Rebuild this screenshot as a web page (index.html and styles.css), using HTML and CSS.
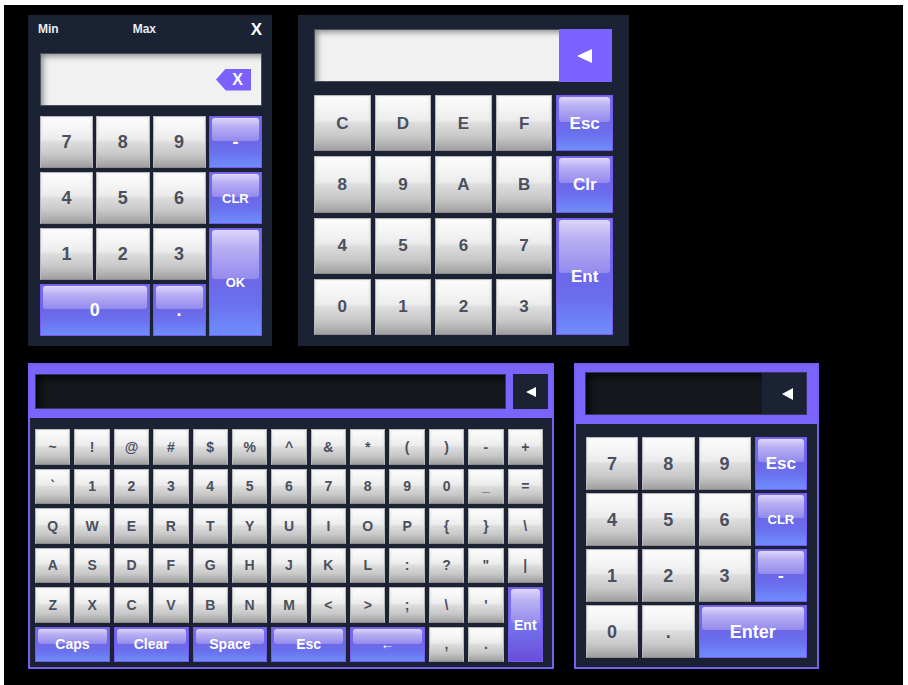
FILE: index.html
```html
<!DOCTYPE html>
<html>
<head>
<meta charset="utf-8">
<link rel="stylesheet" href="styles.css">
</head>
<body>
<div class="page">
  <div class="row row-top">
    <section class="panel pad1">
      <div class="head">
        <span class="min">Min</span>
        <span class="max">Max</span>
        <span class="close">X</span>
      </div>
      <div class="display light">
        <span class="bksp">X</span>
      </div>
      <div class="grid g1">
        <div class="k">7</div><div class="k">8</div><div class="k">9</div><div class="p">-</div>
        <div class="k">4</div><div class="k">5</div><div class="k">6</div><div class="p sm">CLR</div>
        <div class="k">1</div><div class="k">2</div><div class="k">3</div><div class="p sm tall">OK</div>
        <div class="p wide">0</div><div class="p">.</div>
      </div>
    </section>

    <section class="panel pad2">
      <div class="display light split">
        <div class="field"></div>
        <div class="arrow purple"><span class="tri t15"></span></div>
      </div>
      <div class="grid g2">
        <div class="k">C</div><div class="k">D</div><div class="k">E</div><div class="k">F</div><div class="p">Esc</div>
        <div class="k">8</div><div class="k">9</div><div class="k">A</div><div class="k">B</div><div class="p">Clr</div>
        <div class="k">4</div><div class="k">5</div><div class="k">6</div><div class="k">7</div><div class="p tall">Ent</div>
        <div class="k">0</div><div class="k">1</div><div class="k">2</div><div class="k">3</div>
      </div>
    </section>
  </div>

  <div class="row row-bottom">
    <section class="panel framed kb">
      <div class="band kb-band">
        <div class="display dark kb-field"></div>
        <div class="arrow navy kb-arrow"><span class="tri t10"></span></div>
      </div>
      <div class="body kb-body">
        <div class="grid g3">
          <div class="k">~</div><div class="k">!</div><div class="k">@</div><div class="k">#</div><div class="k">$</div><div class="k">%</div><div class="k">^</div><div class="k">&amp;</div><div class="k">*</div><div class="k">(</div><div class="k">)</div><div class="k">-</div><div class="k">+</div>
          <div class="k">`</div><div class="k">1</div><div class="k">2</div><div class="k">3</div><div class="k">4</div><div class="k">5</div><div class="k">6</div><div class="k">7</div><div class="k">8</div><div class="k">9</div><div class="k">0</div><div class="k">_</div><div class="k">=</div>
          <div class="k">Q</div><div class="k">W</div><div class="k">E</div><div class="k">R</div><div class="k">T</div><div class="k">Y</div><div class="k">U</div><div class="k">I</div><div class="k">O</div><div class="k">P</div><div class="k">{</div><div class="k">}</div><div class="k">\</div>
          <div class="k">A</div><div class="k">S</div><div class="k">D</div><div class="k">F</div><div class="k">G</div><div class="k">H</div><div class="k">J</div><div class="k">K</div><div class="k">L</div><div class="k">:</div><div class="k">?</div><div class="k">"</div><div class="k">|</div>
          <div class="k">Z</div><div class="k">X</div><div class="k">C</div><div class="k">V</div><div class="k">B</div><div class="k">N</div><div class="k">M</div><div class="k">&lt;</div><div class="k">&gt;</div><div class="k">;</div><div class="k">\</div><div class="k">'</div><div class="p tall ent-kb">Ent</div>
          <div class="p wide">Caps</div><div class="p wide">Clear</div><div class="p wide">Space</div><div class="p wide">Esc</div><div class="p wide arrow-key">&#8592;</div><div class="k">,</div><div class="k">.</div>
        </div>
      </div>
    </section>

    <section class="panel framed np">
      <div class="band np-band">
        <div class="display dark split np-display">
          <div class="field"></div>
          <div class="arrow navy np-arrow"><span class="tri t13"></span></div>
        </div>
      </div>
      <div class="body np-body">
        <div class="grid g4">
          <div class="k">7</div><div class="k">8</div><div class="k">9</div><div class="p">Esc</div>
          <div class="k">4</div><div class="k">5</div><div class="k">6</div><div class="p sm">CLR</div>
          <div class="k">1</div><div class="k">2</div><div class="k">3</div><div class="p">-</div>
          <div class="k">0</div><div class="k">.</div><div class="p wide enter">Enter</div>
        </div>
      </div>
    </section>
  </div>
</div>
</body>
</html>
```

FILE: styles.css
```css
html, body {
  margin: 0;
  padding: 0;
  background: #ffffff;
  overflow: hidden;
}

.page {
  margin: 5px 5px 0 4px;
  height: 680px;
  background: #000000;
  box-sizing: border-box;
  padding: 10px 0 0 24px;
  font-family: "Liberation Sans", Arial, sans-serif;
  font-weight: bold;
}

.row {
  display: flex;
  align-items: flex-start;
}

.row-top { gap: 26px; }
.row-bottom { gap: 20px; margin-top: 17px; }

.panel {
  background: #1b2233;
  box-sizing: border-box;
}

/* ---------- panel 1 ---------- */
.pad1 {
  width: 244px;
  height: 331px;
  padding: 0 10px 10px 12px;
}

.head {
  height: 28px;
  margin-left: -2px;
  display: flex;
  align-items: center;
  color: #e6ecf5;
  font-size: 12px;
}

.head .max { margin-left: 74px; }
.head .close {
  margin-left: auto;
  font-size: 17px;
  color: #ffffff;
  padding-top: 2px;
}

.display {
  box-sizing: border-box;
}

.light {
  background: #f1f1f1;
  border: 1px solid #4a505c;
  box-shadow: inset 5px 5px 6px -3px rgba(0, 0, 0, 0.45);
}

.pad1 .display {
  margin-top: 10px;
  width: 222px;
  height: 53px;
  display: flex;
  align-items: center;
  justify-content: flex-end;
  padding-right: 10px;
}

.bksp {
  width: 35px;
  height: 22px;
  background: #7b61ff;
  color: #ffffff;
  font-size: 16px;
  display: flex;
  align-items: center;
  justify-content: center;
  padding-left: 8px;
  box-sizing: border-box;
  clip-path: polygon(28% 0, 100% 0, 100% 100%, 28% 100%, 0 50%);
}

.grid {
  display: grid;
}

.g1 {
  margin-top: 10px;
  width: 222px;
  height: 220px;
  grid-template-columns: repeat(4, 1fr);
  grid-template-rows: repeat(4, 1fr);
  column-gap: 3px;
  row-gap: 4px;
  font-size: 18px;
}

/* ---------- keys ---------- */
.k, .p {
  position: relative;
  z-index: 0;
  box-sizing: border-box;
  display: flex;
  align-items: center;
  justify-content: center;
  line-height: 1;
}

.k {
  color: #4a505d;
  border: 1px solid #b9b9b9;
  border-bottom-color: #8c8c8c;
  background: linear-gradient(to bottom, #f4f4f4 0%, #e9e9e9 46%, #dddddd 50%, #c8c8c8 75%, #a0a0a0 100%);
}

.k::before {
  content: "";
  position: absolute;
  z-index: -1;
  left: 2px;
  right: 2px;
  top: 1px;
  height: 44%;
  border-radius: 3px;
  background: linear-gradient(to bottom, rgba(255, 255, 255, 0.7), rgba(255, 255, 255, 0.1));
}

.p {
  color: #ffffff;
  border: 1px solid #7559f2;
  background: linear-gradient(to bottom, #7a6ce8 0%, #6c68e8 50%, #6a70ee 70%, #6f8dfb 100%);
}

.p::before {
  content: "";
  position: absolute;
  z-index: -1;
  left: 2px;
  right: 2px;
  top: 1px;
  height: 46%;
  border-radius: 3px;
  background: linear-gradient(to bottom, #ddd6fa 0%, #b9b0f3 35%, #948aee 100%);
}

.p.sm { font-size: 13px; }
.wide { grid-column: span 2; }
.tall { grid-row: span 2; }

/* ---------- panel 2 ---------- */
.pad2 {
  width: 331px;
  height: 331px;
  padding: 14px 16px 11px 16px;
}

.split {
  display: flex;
}

.pad2 .display {
  width: 298px;
  height: 53px;
  box-shadow: none;
  border: none;
}

.pad2 .field {
  flex: 1;
  background: #f1f1f1;
  border: 1px solid #4a505c;
  border-right: none;
  box-shadow: inset 5px 5px 6px -3px rgba(0, 0, 0, 0.45);
}

.arrow {
  display: flex;
  align-items: center;
  justify-content: center;
  box-sizing: border-box;
}

.purple { background: #7b61ff; }
.navy { background: #1b2233; }

.pad2 .arrow { width: 53px; }

.tri {
  display: block;
  width: 0;
  height: 0;
  border-style: solid;
  border-color: transparent #ffffff transparent transparent;
}

.t15 { border-width: 7px 15px 7px 0; margin-left: -2px; }
.t10 { border-width: 5px 10px 5px 0; }
.t13 { border-width: 6.5px 11px 6.5px 0; margin-left: 6px; }

.g2 {
  margin-top: 13px;
  width: 299px;
  height: 240px;
  grid-template-columns: repeat(5, 1fr);
  grid-template-rows: repeat(4, 1fr);
  column-gap: 4px;
  row-gap: 5px;
  font-size: 17px;
}

/* ---------- framed panels ---------- */
.framed {
  border: 2px solid #7560f5;
}

.band {
  background: #7b64fb;
  box-sizing: border-box;
  display: flex;
}

.dark {
  background: #14171c;
  border: 1px solid #3a3560;
  box-shadow: inset 6px 5px 8px -3px rgba(0, 0, 0, 0.9);
}

/* keyboard */
.kb {
  width: 526px;
  height: 306px;
}

.kb-band {
  height: 53px;
  padding: 9px 4px 9px 5px;
  gap: 7px;
}

.kb-field {
  flex: 1;
}

.kb-arrow {
  width: 35px;
}

.kb-body {
  padding: 11px 9px 5px 5px;
}

.g3 {
  width: 508px;
  height: 233px;
  grid-template-columns: repeat(13, 1fr);
  grid-template-rows: repeat(6, 1fr);
  column-gap: 4px;
  row-gap: 4px;
  font-size: 14px;
}

.g3 .p { font-size: 14px; }
.arrow-key { font-weight: normal; font-size: 16px; }

.p.ent-kb {
  background: linear-gradient(to bottom, #7a6ce8 0%, #7474ec 50%, #6e5ee2 80%, #6a4ddc 100%);
}

/* numpad */
.np {
  width: 245px;
  height: 306px;
}

.np-band {
  height: 59px;
  padding: 7px 10px 9px 9px;
}

.np-display {
  width: 222px;
  height: 43px;
  border: 1px solid #3a3560;
  box-shadow: none;
  background: #1b2233;
}

.np-display .field {
  flex: 1;
  background: #14171c;
  box-shadow: inset 6px 5px 8px -3px rgba(0, 0, 0, 0.9);
}

.np-arrow { width: 44px; }

.np-body {
  padding: 13px 10px 9px 10px;
}

.g4 {
  width: 221px;
  height: 221px;
  grid-template-columns: repeat(4, 1fr);
  grid-template-rows: repeat(4, 1fr);
  column-gap: 4px;
  row-gap: 3px;
  font-size: 18px;
}

.g4 .p { font-size: 17px; }
.g4 .p.sm { font-size: 13px; }
.g4 .enter { font-size: 18px; }
```
